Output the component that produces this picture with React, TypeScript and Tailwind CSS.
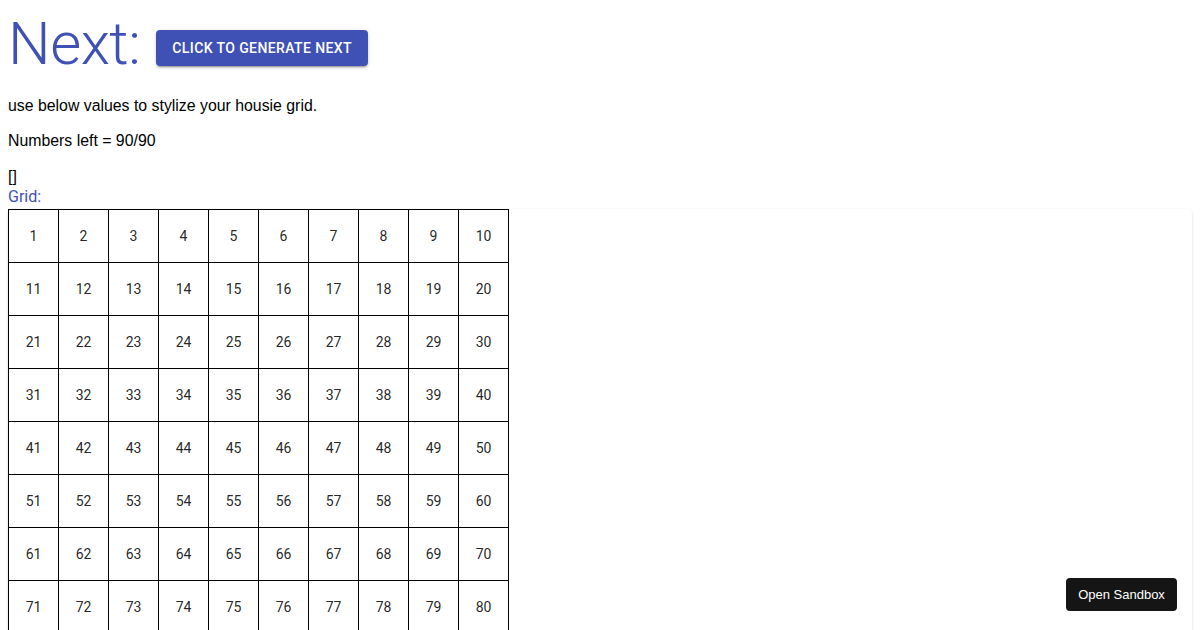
import React from 'react';

const rows = Array.from({ length: 9 }, (_, r) => Array.from({ length: 10 }, (_, c) => r * 10 + c + 1));

export default function App() {
  return (
    <div className="min-h-screen bg-white p-2 text-black font-['Liberation_Sans',Arial,sans-serif]">
      <div className="flex items-center">
        <h2 className="m-0 text-[60px] leading-[72px] font-light tracking-[-0.5px] text-[#3f51b5] font-['Roboto',sans-serif]">
          Next:
        </h2>
        <button className="ml-4 mt-[8px] h-9 px-4 rounded-[4px] bg-[#3f51b5] text-white text-[14px] font-medium uppercase tracking-[0.4px] font-['Roboto',sans-serif] shadow-[0px_3px_1px_-2px_rgba(0,0,0,0.2),0px_2px_2px_0px_rgba(0,0,0,0.14),0px_1px_5px_0px_rgba(0,0,0,0.12)]">
          Click to generate next
        </button>
      </div>

      <p className="mt-[17px] text-[15.85px] leading-[18.4px]">use below values to stylize your housie grid.</p>
      <p className="mt-[17px] text-[15.85px] leading-[18.4px]">Numbers left = 90/90</p>
      <div className="mt-[17px] text-[16px] leading-[18.4px]">[]</div>
      <div className="-mt-px text-[16px] leading-[24px] text-[#3f51b5] font-['Roboto',sans-serif]">Grid:</div>

      <div className="rounded-[4px] bg-white shadow-[0px_2px_1px_-1px_rgba(0,0,0,0.2),0px_1px_1px_0px_rgba(0,0,0,0.14),0px_1px_3px_0px_rgba(0,0,0,0.12)]">
        <table className="border-collapse font-['Roboto',sans-serif] text-[14px] leading-[20px] text-[rgba(0,0,0,0.87)]">
          <tbody>
            {rows.map((row, i) => (
              <tr key={i}>
                {row.map((n) => (
                  <td key={n} className="w-[50px] h-[53px] border border-black text-center p-0">
                    {n}
                  </td>
                ))}
              </tr>
            ))}
          </tbody>
        </table>
      </div>

      <button className="fixed right-[23px] bottom-[19px] h-[33px] w-[111px] rounded-[4px] bg-[#151515] text-white text-[13px] font-['Liberation_Sans',Arial,sans-serif]">
        Open Sandbox
      </button>
    </div>
  );
}
